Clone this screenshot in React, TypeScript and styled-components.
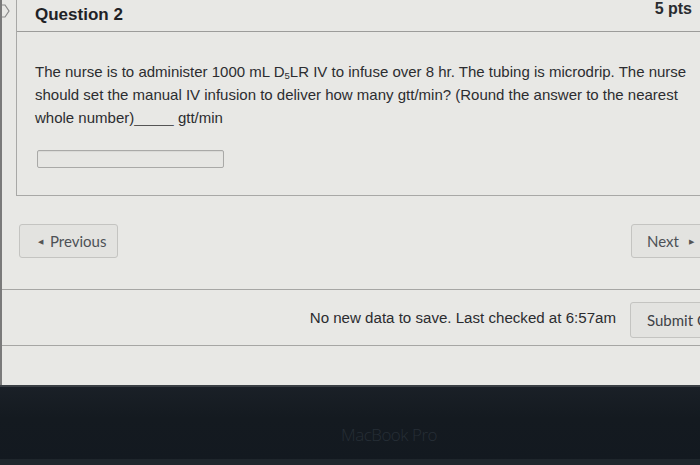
import styled, { createGlobalStyle } from "styled-components";

const GlobalStyle = createGlobalStyle`
    html, body {
        margin: 0;
        padding: 0;
        background: #e7e7e4;
        overflow: hidden;
    }
`;

export default function App(){
    return(
        <>
            <GlobalStyle />
            <Screen>
                <Content>
                    <TopRow>
                        <Gutter>
                            <svg width="8" height="16" viewBox="0 0 8 16">
                                <path d="M0 2 L3 2 L7 8 L3 14 L0 14" fill="none" stroke="#8a8a8a" strokeWidth="1.2" />
                            </svg>
                        </Gutter>
                        <Card>
                            <Header>
                                <Title>Question 2</Title>
                                <Points>5 pts</Points>
                            </Header>
                            <Body>
                                <Prompt>
                                    The nurse is to administer 1000 mL D<sub>5</sub>LR IV to infuse over 8 hr. The tubing is microdrip. The nurse<br />
                                    should set the manual IV infusion to deliver how many gtt/min? (Round the answer to the nearest<br />
                                    whole number)<Blank>_____</Blank>gtt/min
                                </Prompt>
                                <Answer type="text" />
                            </Body>
                        </Card>
                    </TopRow>
                    <NavRow>
                        <NavButton>
                            <Arrow>◀</Arrow>Previous
                        </NavButton>
                        <NavButton $wide>
                            Next<Arrow $after>▶</Arrow>
                        </NavButton>
                    </NavRow>
                    <Divider />
                    <SaveRow>
                        <SaveText>No new data to save. Last checked at 6:57am</SaveText>
                        <SubmitButton>Submit Quiz</SubmitButton>
                    </SaveRow>
                    <Divider />
                </Content>
                <Bezel>
                    <BezelLabel>MacBook Pro</BezelLabel>
                    <BezelEdge />
                </Bezel>
            </Screen>
        </>
    );
}

const Screen = styled.div`
    width: 700px;
    height: 465px;
    overflow: hidden;
    display: flex;
    flex-direction: column;
    font-family: "Liberation Sans", Arial, sans-serif;
`;

const Content = styled.div`
    width: 716px;
    height: 385px;
    flex-shrink: 0;
    box-sizing: border-box;
    border-left: 2px solid #7a7a7a;
    background: #e8e8e5;
    display: flex;
    flex-direction: column;
`;

const TopRow = styled.div`
    display: flex;
`;

const Gutter = styled.div`
    width: 14px;
    flex-shrink: 0;
    padding-top: 3px;
    box-sizing: border-box;
`;

const Card = styled.div`
    flex: 1;
    min-width: 0;
    border-left: 1px solid #a8a8a6;
    border-bottom: 1px solid #a8a8a6;
`;

const Header = styled.div`
    height: 32px;
    box-sizing: border-box;
    border-bottom: 1px solid #9c9c9a;
    padding: 0 24px 0 18px;
    display: flex;
    justify-content: space-between;
    align-items: center;
`;

const Title = styled.div`
    font-weight: bold;
    font-size: 17px;
    color: #1f2226;
    margin-top: -2px;
`;

const Points = styled.div`
    font-weight: bold;
    font-size: 16px;
    color: #2a2c30;
    margin-top: -13px;
`;

const Body = styled.div`
    padding: 28px 18px 27px;
`;

const Prompt = styled.div`
    font-size: 15px;
    line-height: 23px;
    color: #2c2d30;
    white-space: nowrap;

    sub {
        font-size: 9.5px;
        line-height: 0;
        vertical-align: -2px;
    }
`;

const Blank = styled.span`
    color: #555;
    letter-spacing: -0.6px;
    margin-right: 5px;
`;

const Answer = styled.input`
    display: block;
    margin: 21px 0 0 2px;
    width: 187px;
    height: 18px;
    box-sizing: border-box;
    border: 1px solid #a9a9a7;
    border-radius: 2px;
    background: #e6e6e3;
    box-shadow: inset 0 1px 1px rgba(0, 0, 0, 0.06);
    outline: none;
`;

const NavRow = styled.div`
    margin: 28px 0 31px;
    padding: 0 5px 0 17px;
    display: flex;
    justify-content: space-between;
`;

const NavButton = styled.div<{ $wide?: boolean }>`
    height: 34px;
    box-sizing: border-box;
    width: ${p => (p.$wide ? "80px" : "99px")};
    padding: 0 14px 0 ${p => (p.$wide ? "15px" : "18px")};
    display: flex;
    align-items: center;
    border: 1px solid #c4c4c1;
    border-radius: 3px;
    background: #e3e3e0;
    font-family: Lato, "Liberation Sans", sans-serif;
    font-size: 15px;
    color: #4d5156;
`;

const Arrow = styled.span<{ $after?: boolean }>`
    font-size: 7px;
    color: #555;
    margin: ${p => (p.$after ? "0 0 0 10px" : "0 7px 0 0")};
`;

const Divider = styled.div`
    height: 1px;
    background: #a6a6a4;
`;

const SaveRow = styled.div`
    height: 55px;
    display: flex;
    justify-content: flex-end;
    align-items: center;
    gap: 14px;
`;

const SaveText = styled.div`
    font-size: 15.1px;
    color: #2b2c2f;
    margin-top: -1px;
`;

const SubmitButton = styled.div`
    width: 110px;
    flex-shrink: 0;
    margin-right: -24px;
    height: 36px;
    box-sizing: border-box;
    padding: 0 16px;
    display: flex;
    align-items: center;
    border: 1px solid #c4c4c1;
    border-radius: 3px;
    background: #e3e3e0;
    font-family: Lato, "Liberation Sans", sans-serif;
    font-size: 15px;
    color: #3e4247;
    white-space: nowrap;
    margin-top: 4px;
`;

const Bezel = styled.div`
    flex: 1;
    position: relative;
    background: linear-gradient(180deg, #1a2027 0%, #141a20 40%, #131920 100%);
    border-top: 2px solid #3a3f44;
    display: flex;
    flex-direction: column;
    align-items: center;
`;

const BezelLabel = styled.div`
    margin-top: 36px;
    margin-left: 78px;
    font-family: "Open Sans", sans-serif;
    font-weight: 300;
    font-size: 17px;
    letter-spacing: -0.5px;
    color: #262e36;
`;

const BezelEdge = styled.div`
    margin-top: auto;
    align-self: stretch;
    height: 6px;
    background: #1f262c;
`;
